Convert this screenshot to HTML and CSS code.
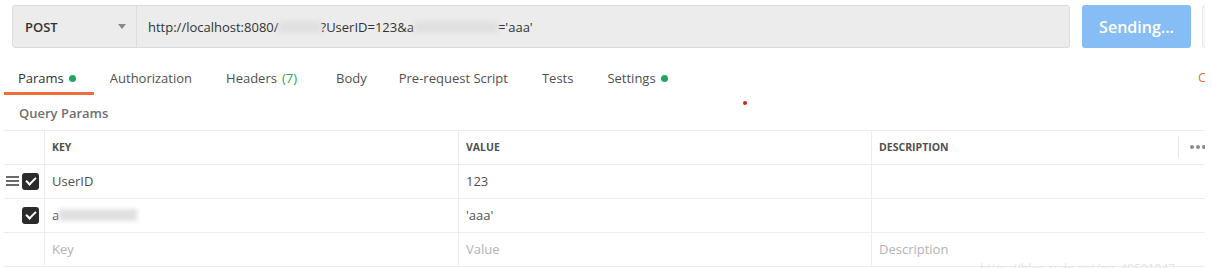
FILE: index.html
```html
<!DOCTYPE html>
<html>
<head>
    <title>Request</title>
    <link rel="stylesheet" href="styles.css">
</head>
<body>
    <div class="page">
        <div class="topbar">
            <div class="request">
                <div class="method">
                    <span>POST</span>
                    <span class="caret"></span>
                </div>
                <div class="url">http://localhost:8080/<span class="blur" style="width:42px"></span>?UserID=123&amp;a<span class="blur" style="width:84px"></span>='aaa'</div>
            </div>
            <button class="send">Sending...</button>
            <div class="save"></div>
        </div>

        <div class="tabs">
            <div class="tab active">Params <span class="dot"></span></div>
            <div class="tab">Authorization</div>
            <div class="tab">Headers <span class="count">(7)</span></div>
            <div class="tab">Body</div>
            <div class="tab">Pre-request Script</div>
            <div class="tab">Tests</div>
            <div class="tab">Settings <span class="dot"></span></div>
            <div class="cookies">Cookies</div>
            <span class="red-dot"></span>
        </div>

        <div class="section-title">Query Params</div>

        <div class="params">
            <div class="cell"></div>
            <div class="cell head">KEY</div>
            <div class="cell head">VALUE</div>
            <div class="cell head last">DESCRIPTION <span class="more"><i></i><i></i><i></i></span></div>

            <div class="cell ctrl"><span class="handle"><i></i><i></i><i></i></span><span class="check"></span></div>
            <div class="cell">UserID</div>
            <div class="cell">123</div>
            <div class="cell last"></div>

            <div class="cell ctrl"><span class="check"></span></div>
            <div class="cell">a<span class="blur" style="width:78px"></span></div>
            <div class="cell">'aaa'</div>
            <div class="cell last"></div>

            <div class="cell"></div>
            <div class="cell empty">Key</div>
            <div class="cell empty">Value</div>
            <div class="cell empty last">Description</div>
        </div>
        <div class="watermark">https://blog.csdn.net/qq_40501047</div>
    </div>
</body>
</html>
```

FILE: styles.css
```css
body {
    margin: 0;
    font-family: "Open Sans", Arial, sans-serif;
    color: #505050;
    background: #fff;
}
.page {
    position: relative;
    width: 1205px;
    height: 268px;
    overflow: hidden;
}
.topbar {
    display: flex;
    padding: 5px 0 0 12px;
    height: 43px;
}
.topbar > * {
    flex-shrink: 0;
}
.request {
    display: flex;
    width: 1058px;
    box-sizing: border-box;
    background: #ececec;
    border: 1px solid #dcdcdc;
    border-radius: 3px;
}
.method {
    display: flex;
    align-items: center;
    justify-content: space-between;
    width: 124px;
    box-sizing: border-box;
    padding: 0 10px 0 12px;
    border-right: 1px solid #dcdcdc;
    font-size: 13px;
    font-weight: 600;
    color: #333;
}
.caret {
    width: 0;
    height: 0;
    border-left: 4px solid transparent;
    border-right: 4px solid transparent;
    border-top: 5px solid #888;
}
.url {
    display: flex;
    align-items: center;
    padding-left: 11px;
    font-size: 13px;
    color: #333;
    white-space: nowrap;
}
.blur {
    display: inline-block;
    height: 12px;
    background: #e0e0e0;
    filter: blur(2px);
}
.send {
    margin-left: 12px;
    width: 109px;
    height: 43px;
    border: none;
    border-radius: 3px;
    background: #86bdf5;
    color: #fff;
    font-family: "Open Sans", Arial, sans-serif;
    font-size: 16px;
    font-weight: 600;
}
.save {
    margin-left: 11px;
    width: 40px;
    height: 43px;
    box-sizing: border-box;
    background: #f6f6f6;
    border: 1px solid #e6e6e6;
    border-radius: 3px;
}
.tabs {
    position: relative;
    display: flex;
    height: 47px;
    padding-left: 4px;
}
.tab {
    display: flex;
    align-items: center;
    gap: 5px;
    margin-top: 14px;
    padding-top: 2px;
    height: 33px;
    padding-left: 14px;
    padding-right: 18px;
    font-size: 13px;
    color: #505050;
    box-sizing: border-box;
    border-bottom: 3px solid transparent;
}
.tab.active {
    border-bottom-color: #f26b3a;
    color: #333;
}
.tab:nth-child(2) { padding-left: 16px; padding-right: 18px; }
.tab:nth-child(3) { padding-left: 16px; padding-right: 39px; }
.tab:nth-child(4) { padding-left: 0; padding-right: 32px; }
.tab:nth-child(5) { padding-left: 0; padding-right: 34px; }
.tab:nth-child(6) { padding-left: 0; padding-right: 34px; }
.tab:nth-child(7) { padding-left: 0; }
.count {
    color: #26a65b;
}
.dot {
    display: inline-block;
    width: 7px;
    height: 7px;
    border-radius: 50%;
    background: #26a65b;
}
.cookies {
    position: absolute;
    left: 1198px;
    top: 20px;
    font-size: 13px;
    color: #f26b3a;
}
.red-dot {
    position: absolute;
    left: 743px;
    top: 53px;
    width: 4px;
    height: 4px;
    border-radius: 50%;
    background: #e81818;
}
.section-title {
    height: 35px;
    line-height: 37px;
    padding-left: 19px;
    font-size: 13px;
    font-weight: 600;
    color: #707070;
}
.params {
    display: grid;
    grid-template-columns: 41px 414px 413px 333px;
    margin-left: 4px;
    border-top: 1px solid #ededed;
}
.cell {
    display: flex;
    align-items: center;
    height: 34px;
    padding-left: 7px;
    padding-bottom: 1px;
    box-sizing: border-box;
    border-bottom: 1px solid #ededed;
    border-right: 1px solid #ededed;
    font-size: 13px;
    color: #505050;
    white-space: nowrap;
}
.cell:nth-child(4n+1) {
    padding-left: 0;
}
.cell.last {
    border-right: none;
}
.cell.head {
    font-size: 10.5px;
    font-weight: 700;
    color: #505050;
}
.cell.empty {
    color: #b3b3b3;
}
.more {
    display: flex;
    gap: 2px;
    margin-left: auto;
    height: 22px;
    align-items: center;
    padding-left: 11px;
    border-left: 1px solid #e6e6e6;
    width: 16px;
    margin-right: -1px;
}
.more i {
    flex-shrink: 0;
    width: 4px;
    height: 4px;
    border-radius: 50%;
    background: #8a8a8a;
}
.ctrl {
    justify-content: flex-end;
    gap: 3px;
}
.params .ctrl.cell {
    padding-left: 0;
    padding-right: 5px;
}
.handle {
    display: flex;
    flex-direction: column;
    gap: 2px;
}
.handle i {
    width: 13px;
    height: 2px;
    background: #6a6a6a;
}
.check {
    position: relative;
    width: 17px;
    height: 17px;
    border-radius: 3px;
    background: #2b2b2b;
}
.check::after {
    content: "";
    position: absolute;
    left: 6px;
    top: 2px;
    width: 4px;
    height: 8px;
    border-right: 2px solid #fff;
    border-bottom: 2px solid #fff;
    transform: rotate(45deg);
}
.watermark {
    position: absolute;
    left: 980px;
    top: 260px;
    font-size: 12px;
    color: #e4e4e4;
}
```
